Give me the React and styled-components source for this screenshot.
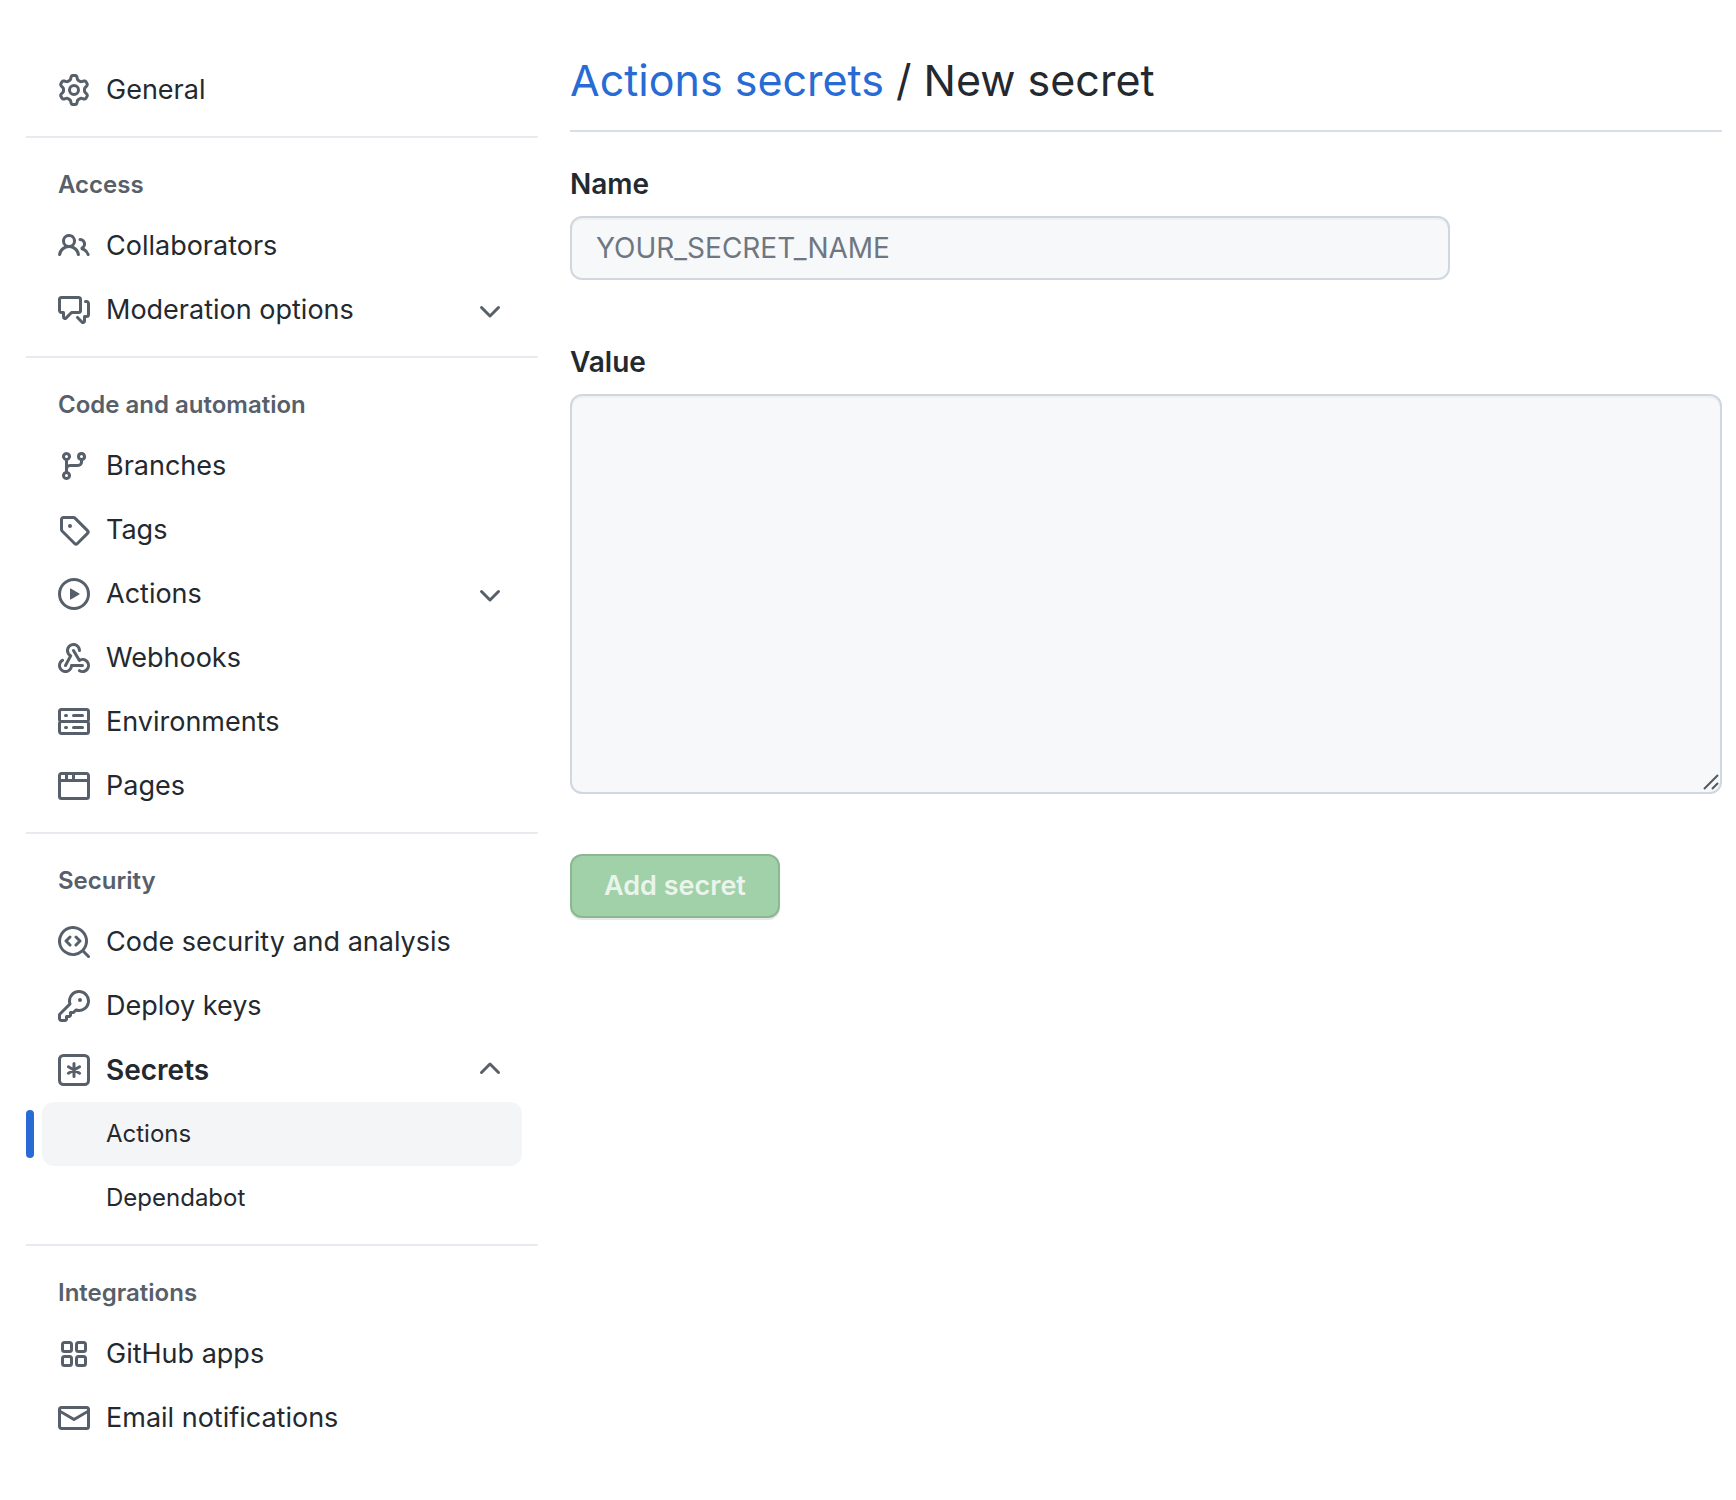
import React, { useState } from "react";
import styled, { createGlobalStyle, css } from "styled-components";

const color = {
  text: "#24292f",
  muted: "#57606a",
  placeholder: "#6e7781",
  accent: "#286bd5",
  border: "#d0d7de",
  rule: "#d8dee4",
  softRule: "#e7ebef",
  field: "#f6f8fa",
  selected: "#f4f5f7",
};

const GlobalStyle = createGlobalStyle`
  *, *::before, *::after { box-sizing: border-box; }
  body {
    margin: 0;
    background: #fff;
    color: ${color.text};
    font-family: Inter, "Liberation Sans", sans-serif;
    font-size: 28px;
    line-height: 40px;
  }
`;

const Page = styled.div`
  display: flex;
  align-items: flex-start;
  gap: 32px;
  padding: 0 14px 48px 26px;
`;

const Sidebar = styled.nav`
  flex: 0 0 512px;
  padding-top: 58px;
`;

const Group = styled.section`
  & + & {
    margin-top: 14px;
    padding-top: 27px;
    border-top: 2px solid ${color.softRule};
  }
`;

const GroupTitle = styled.h2`
  margin: 0 32px 9px;
  color: ${color.muted};
  font-size: 24px;
  font-weight: 600;
  line-height: 40px;
`;

const List = styled.ul`
  margin: 0;
  padding: 0 16px;
  list-style: none;
`;

const SubList = styled(List)`
  padding: 0;
`;

const rowStyle = css`
  display: flex;
  align-items: center;
  gap: 16px;
  width: 100%;
  padding: 12px 16px;
  border: 0;
  border-radius: 12px;
  background: transparent;
  color: ${color.text};
  font: inherit;
  font-size: 27px;
  text-align: left;
  text-decoration: none;
  cursor: pointer;
`;

const RowLink = styled.a`
  ${rowStyle}
`;

const RowToggle = styled.button`
  ${rowStyle}
  ${(p) =>
    p.$strong &&
    css`
      font-size: 28px;
      font-weight: 600;
    `}
`;

const SubLink = styled.a`
  ${rowStyle}
  position: relative;
  padding-left: 64px;
  font-size: 24px;
  ${(p) =>
    p.$selected &&
    css`
      background: ${color.selected};
      &::before {
        content: "";
        position: absolute;
        top: 8px;
        bottom: 8px;
        left: -16px;
        width: 8px;
        border-radius: 4px;
        background: ${color.accent};
      }
    `}
`;

const RowLabel = styled.span`
  flex: 1;
`;

const IconSvg = styled.svg`
  flex: none;
  width: 32px;
  height: 32px;
  fill: ${color.muted};
`;

const Main = styled.main`
  flex: 1;
  min-width: 0;
  padding-top: 48px;
`;

const Title = styled.h1`
  margin: 0 0 32px;
  padding-bottom: 18px;
  border-bottom: 2px solid ${color.rule};
  font-size: 43px;
  font-weight: 400;
  line-height: 64px;
`;

const TitleLink = styled.a`
  color: ${color.accent};
  text-decoration: none;
`;

const Fields = styled.div`
  display: flex;
  flex-direction: column;
  gap: 62px;
  margin-bottom: 60px;
`;

const Field = styled.div`
  display: flex;
  flex-direction: column;
  gap: 12px;
`;

const Label = styled.label`
  font-weight: 600;
`;

const controlStyle = css`
  width: 100%;
  border: 2px solid ${color.border};
  border-radius: 12px;
  outline: none;
  background: ${color.field};
  box-shadow: inset 0 2px 0 rgba(208, 215, 222, 0.2);
  color: ${color.text};
  font: inherit;
`;

const TextInput = styled.input`
  ${controlStyle}
  max-width: 880px;
  height: 64px;
  padding: 10px 24px;
  &::placeholder {
    color: ${color.placeholder};
    opacity: 1;
  }
`;

const TextAreaBox = styled.div`
  position: relative;
  display: flex;
`;

const TextArea = styled.textarea`
  ${controlStyle}
  height: 400px;
  padding: 16px 24px;
  resize: vertical;
  &::-webkit-resizer {
    background: transparent;
  }
`;

const Grip = styled.svg`
  position: absolute;
  right: 3px;
  bottom: 4px;
  width: 16px;
  height: 16px;
  fill: none;
  stroke: #55585c;
  stroke-width: 2;
  pointer-events: none;
`;

const SubmitButton = styled.button`
  height: 64px;
  padding: 0 32px;
  border: 2px solid #8bb893;
  border-radius: 12px;
  background: #a1d1a8;
  box-shadow: 0 2px 0 rgba(27, 31, 36, 0.1);
  color: rgba(255, 255, 255, 0.8);
  font: inherit;
  font-size: 27px;
  font-weight: 600;
`;

const icons = {
  gear: (
    <path d="M7.429 1.525a6.593 6.593 0 011.142 0c.036.003.108.036.137.146l.289 1.105c.147.56.55.967.997 1.189.174.086.341.183.501.29.417.278.97.423 1.53.27l1.102-.303c.11-.03.175.016.195.046.219.31.41.641.573.989.014.031.022.11-.059.19l-.815.806c-.411.406-.562.957-.53 1.456a4.588 4.588 0 010 .582c-.032.499.119 1.05.53 1.456l.815.806c.08.08.073.159.059.19a6.494 6.494 0 01-.573.99c-.02.029-.086.074-.195.045l-1.103-.303c-.559-.153-1.112-.008-1.529.27-.16.107-.327.204-.5.29-.449.222-.851.628-.998 1.189l-.289 1.105c-.029.11-.101.143-.137.146a6.613 6.613 0 01-1.142 0c-.036-.003-.108-.037-.137-.146l-.289-1.105c-.147-.56-.55-.967-.997-1.189a4.502 4.502 0 01-.501-.29c-.417-.278-.97-.423-1.53-.27l-1.102.303c-.11.03-.175-.016-.195-.046a6.492 6.492 0 01-.573-.989c-.014-.031-.022-.11.059-.19l.815-.806c.411-.406.562-.957.53-1.456a4.587 4.587 0 010-.582c.032-.499-.119-1.05-.53-1.456l-.815-.806c-.08-.08-.073-.159-.059-.19a6.44 6.44 0 01.573-.99c.02-.029.086-.075.195-.045l1.103.303c.559.153 1.112.008 1.529-.27.16-.107.327-.204.5-.29.449-.222.851-.628.998-1.189l.289-1.105c.029-.11.101-.143.137-.146zM8 0c-.236 0-.47.01-.701.03-.743.065-1.29.615-1.458 1.261l-.29 1.106c-.017.066-.078.158-.211.224a5.994 5.994 0 00-.668.386c-.123.082-.233.09-.3.071L3.27 2.776c-.644-.177-1.392.02-1.82.63a7.977 7.977 0 00-.704 1.217c-.315.675-.111 1.422.363 1.891l.815.806c.05.048.098.147.088.294a6.084 6.084 0 000 .772c.01.147-.038.246-.088.294l-.815.806c-.474.469-.678 1.216-.363 1.891.2.428.436.835.704 1.218.428.609 1.176.806 1.82.63l1.103-.303c.066-.019.176-.011.299.071.213.143.436.272.668.386.133.066.194.158.212.224l.289 1.106c.169.646.715 1.196 1.458 1.26a8.094 8.094 0 001.402 0c.743-.064 1.29-.614 1.458-1.26l.29-1.106c.017-.066.078-.158.211-.224a5.98 5.98 0 00.668-.386c.123-.082.233-.09.3-.071l1.102.302c.644.177 1.392-.02 1.82-.63.268-.382.505-.789.704-1.217.315-.675.111-1.422-.364-1.891l-.814-.806c-.05-.048-.098-.147-.088-.294a6.1 6.1 0 000-.772c-.01-.147.039-.246.088-.294l.814-.806c.475-.469.679-1.216.364-1.891a7.992 7.992 0 00-.704-1.218c-.428-.609-1.176-.806-1.82-.63l-1.103.303c-.066.019-.176.011-.299-.071a5.991 5.991 0 00-.668-.386c-.133-.066-.194-.158-.212-.224L10.16 1.29C9.99.645 9.444.095 8.701.031A8.094 8.094 0 008 0zm1.5 8a1.5 1.5 0 11-3 0 1.5 1.5 0 013 0zM11 8a3 3 0 11-6 0 3 3 0 016 0z" />
  ),
  people: (
    <path d="M5.5 3.5a2 2 0 100 4 2 2 0 000-4zM2 5.5a3.5 3.5 0 115.898 2.549 5.507 5.507 0 013.034 4.084.75.75 0 11-1.482.235 4.001 4.001 0 00-7.9 0 .75.75 0 01-1.482-.236A5.507 5.507 0 013.102 8.05 3.49 3.49 0 012 5.5zM11 4a.75.75 0 100 1.5 1.5 1.5 0 01.666 2.844.75.75 0 00-.416.672v.352a.75.75 0 00.574.73c1.2.289 2.162 1.2 2.522 2.372a.75.75 0 101.434-.44 5.01 5.01 0 00-2.56-3.012A3 3 0 0011 4z" />
  ),
  discussion: (
    <path d="M1.5 2.75a.25.25 0 01.25-.25h8.5a.25.25 0 01.25.25v5.5a.25.25 0 01-.25.25h-3.5a.75.75 0 00-.53.22L3.5 11.44V9.25a.75.75 0 00-.75-.75h-1a.25.25 0 01-.25-.25v-5.5zM1.75 1A1.75 1.75 0 000 2.75v5.5C0 9.216.784 10 1.75 10H2v1.543a1.457 1.457 0 002.487 1.03L7.061 10h3.189A1.75 1.75 0 0012 8.25v-5.5A1.75 1.75 0 0010.25 1h-8.5zM14.5 4.75a.25.25 0 00-.25-.25h-.5a.75.75 0 110-1.5h.5c.966 0 1.75.784 1.75 1.75v5.5A1.75 1.75 0 0114.25 12H14v1.543a1.457 1.457 0 01-2.487 1.03L9.22 12.28a.75.75 0 111.06-1.06l2.22 2.22v-2.19a.75.75 0 01.75-.75h1a.25.25 0 00.25-.25v-5.5z" />
  ),
  branch: (
    <path d="M11.75 2.5a.75.75 0 100 1.5.75.75 0 000-1.5zm-2.25.75a2.25 2.25 0 113 2.122V6A2.5 2.5 0 0110 8.5H6a1 1 0 00-1 1v1.128a2.251 2.251 0 11-1.5 0V5.372a2.25 2.25 0 111.5 0v1.836A2.492 2.492 0 016 7h4a1 1 0 001-1v-.628A2.25 2.25 0 019.5 3.25zM4.25 12a.75.75 0 100 1.5.75.75 0 000-1.5zM3.5 3.25a.75.75 0 111.5 0 .75.75 0 01-1.5 0z" />
  ),
  tag: (
    <path d="M2.5 7.775V2.75a.25.25 0 01.25-.25h5.025a.25.25 0 01.177.073l6.25 6.25a.25.25 0 010 .354l-5.025 5.025a.25.25 0 01-.354 0l-6.25-6.25a.25.25 0 01-.073-.177zm-1.5 0V2.75C1 1.784 1.784 1 2.75 1h5.025c.464 0 .91.184 1.238.513l6.25 6.25a1.75 1.75 0 010 2.474l-5.026 5.026a1.75 1.75 0 01-2.474 0l-6.25-6.25A1.75 1.75 0 011 7.775zM6 5a1 1 0 100 2 1 1 0 000-2z" />
  ),
  play: (
    <path d="M1.5 8a6.5 6.5 0 1113 0 6.5 6.5 0 01-13 0zM8 0a8 8 0 100 16A8 8 0 008 0zM6.379 5.227A.25.25 0 006 5.442v5.117a.25.25 0 00.379.214l4.264-2.559a.25.25 0 000-.428L6.379 5.227z" />
  ),
  webhook: (
    <path d="M5.5 4.25a2.25 2.25 0 014.5 0 .75.75 0 001.5 0 3.75 3.75 0 10-6.14 2.889l-2.272 4.258a.75.75 0 001.324.706L7 7.25a.75.75 0 00-.309-1.015A2.25 2.25 0 015.5 4.25zM7.364 3.607a.75.75 0 011.03.257l2.608 4.349a3.75 3.75 0 11-.628 6.785.75.75 0 01.752-1.299 2.25 2.25 0 10-.033-3.88.75.75 0 01-1.03-.256L7.107 4.636a.75.75 0 01.257-1.03zM2.9 8.776A.75.75 0 012.625 9.8 2.25 2.25 0 106 11.75a.75.75 0 01.75-.751h5.5a.75.75 0 010 1.5H7.425a3.751 3.751 0 11-5.55-3.998.75.75 0 011.024.274z" />
  ),
  server: (
    <path d="M1.75 1A1.75 1.75 0 000 2.75v4c0 .372.116.717.314 1a1.742 1.742 0 00-.314 1v4c0 .966.784 1.75 1.75 1.75h12.5A1.75 1.75 0 0016 12.75v-4c0-.372-.116-.717-.314-1 .198-.283.314-.628.314-1v-4A1.75 1.75 0 0014.25 1H1.75zm0 7.5a.25.25 0 00-.25.25v4c0 .138.112.25.25.25h12.5a.25.25 0 00.25-.25v-4a.25.25 0 00-.25-.25H1.75zM1.5 2.75a.25.25 0 01.25-.25h12.5a.25.25 0 01.25.25v4a.25.25 0 01-.25.25H1.75a.25.25 0 01-.25-.25v-4zm5.5 2A.75.75 0 017.75 4h4.5a.75.75 0 010 1.5h-4.5A.75.75 0 017 4.75zM7.75 10a.75.75 0 000 1.5h4.5a.75.75 0 000-1.5h-4.5zM3 4.75A.75.75 0 013.75 4h.5a.75.75 0 010 1.5h-.5A.75.75 0 013 4.75zM3.75 10a.75.75 0 000 1.5h.5a.75.75 0 000-1.5h-.5z" />
  ),
  browser: (
    <path d="M0 2.75C0 1.784.784 1 1.75 1h12.5c.966 0 1.75.784 1.75 1.75v10.5A1.75 1.75 0 0114.25 15H1.75A1.75 1.75 0 010 13.25V2.75zm1.75-.25a.25.25 0 00-.25.25V4.5h2v-2H1.75zM5 2.5v2h2v-2H5zm3.5 0v2h6V2.75a.25.25 0 00-.25-.25H8.5zm6 3.5h-13v7.25c0 .138.112.25.25.25h12.5a.25.25 0 00.25-.25V6z" />
  ),
  codescan: (
    <path d="M8.47 4.97a.75.75 0 000 1.06L9.94 7.5 8.47 8.97a.75.75 0 101.06 1.06l2-2a.75.75 0 000-1.06l-2-2a.75.75 0 00-1.06 0zM6.53 6.03a.75.75 0 00-1.06-1.06l-2 2a.75.75 0 000 1.06l2 2a.75.75 0 101.06-1.06L5.06 7.5l1.47-1.47zM12.246 13.307a7.5 7.5 0 111.06-1.06l2.474 2.473a.75.75 0 11-1.06 1.06l-2.474-2.473zM1.5 7.5a6 6 0 1110.386 4.094.75.75 0 00-.292.293A6 6 0 011.5 7.5z" />
  ),
  key: (
    <path d="M6.5 5.5a4 4 0 112.731 3.795.75.75 0 00-.768.18L7.44 10.5H6.25a.75.75 0 00-.75.75v1.19l-.06.06H4.25a.75.75 0 00-.75.75v1.19l-.06.06H1.75a.25.25 0 01-.25-.25v-1.69l5.024-5.023a.75.75 0 00.181-.768A3.995 3.995 0 016.5 5.5zm4-5.5a5.5 5.5 0 00-5.348 6.788L.22 11.72a.75.75 0 00-.22.53v2C0 15.216.784 16 1.75 16h2a.75.75 0 00.53-.22l.5-.5a.75.75 0 00.22-.53V14h.75a.75.75 0 00.53-.22l.5-.5a.75.75 0 00.22-.53V12h.75a.75.75 0 00.53-.22l.932-.932A5.5 5.5 0 1010.5 0zm.5 6a1 1 0 100-2 1 1 0 000 2z" />
  ),
  asterisk: (
    <g fill="none" stroke={color.muted} strokeWidth="1.5" strokeLinecap="round">
      <rect x="0.75" y="0.75" width="14.5" height="14.5" rx="2" />
      <path d="M8 4.8v6.4M5.2 6.4l5.6 3.2M10.8 6.4L5.2 9.6" />
    </g>
  ),
  apps: (
    <g fill="none" stroke={color.muted} strokeWidth="1.5">
      <rect x="2.25" y="2.25" width="4.5" height="4.5" rx="1" />
      <rect x="9.25" y="2.25" width="4.5" height="4.5" rx="1" />
      <rect x="2.25" y="9.25" width="4.5" height="4.5" rx="1" />
      <rect x="9.25" y="9.25" width="4.5" height="4.5" rx="1" />
    </g>
  ),
  mail: (
    <path d="M1.75 2A1.75 1.75 0 000 3.75v.736a.75.75 0 000 .027v7.737C0 13.216.784 14 1.75 14h12.5A1.75 1.75 0 0016 12.25v-8.5A1.75 1.75 0 0014.25 2H1.75zM14.5 4.07v-.32a.25.25 0 00-.25-.25H1.75a.25.25 0 00-.25.25v.32L8 7.88l6.5-3.81zm-13 1.74v6.441c0 .138.112.25.25.25h12.5a.25.25 0 00.25-.25V5.809L8.38 9.397a.75.75 0 01-.76 0L1.5 5.809z" />
  ),
  down: (
    <path d="M12.78 6.22a.75.75 0 010 1.06l-4.25 4.25a.75.75 0 01-1.06 0L3.22 7.28a.75.75 0 011.06-1.06L8 9.94l3.72-3.72a.75.75 0 011.06 0z" />
  ),
  up: (
    <path d="M3.22 9.78a.75.75 0 010-1.06l4.25-4.25a.75.75 0 011.06 0l4.25 4.25a.75.75 0 01-1.06 1.06L8 6.06 4.28 9.78a.75.75 0 01-1.06 0z" />
  ),
};

function Icon({ name }) {
  return (
    <IconSvg viewBox="0 0 16 16" fillRule="evenodd" aria-hidden="true">
      {icons[name]}
    </IconSvg>
  );
}

const groups = [
  { items: [{ label: "General", icon: "gear" }] },
  {
    title: "Access",
    items: [
      { label: "Collaborators", icon: "people" },
      { label: "Moderation options", icon: "discussion", children: [] },
    ],
  },
  {
    title: "Code and automation",
    items: [
      { label: "Branches", icon: "branch" },
      { label: "Tags", icon: "tag" },
      { label: "Actions", icon: "play", children: [] },
      { label: "Webhooks", icon: "webhook" },
      { label: "Environments", icon: "server" },
      { label: "Pages", icon: "browser" },
    ],
  },
  {
    title: "Security",
    items: [
      { label: "Code security and analysis", icon: "codescan" },
      { label: "Deploy keys", icon: "key" },
      {
        label: "Secrets",
        icon: "asterisk",
        active: true,
        children: [{ label: "Actions", selected: true }, { label: "Dependabot" }],
      },
    ],
  },
  {
    title: "Integrations",
    items: [
      { label: "GitHub apps", icon: "apps" },
      { label: "Email notifications", icon: "mail" },
    ],
  },
];

function NavItem({ item }) {
  const [open, setOpen] = useState(Boolean(item.active));

  if (!item.children) {
    return (
      <li>
        <RowLink href="#">
          <Icon name={item.icon} />
          <RowLabel>{item.label}</RowLabel>
        </RowLink>
      </li>
    );
  }

  return (
    <li>
      <RowToggle
        type="button"
        $strong={item.active}
        aria-expanded={open}
        onClick={() => setOpen(!open)}
      >
        <Icon name={item.icon} />
        <RowLabel>{item.label}</RowLabel>
        <Icon name={open ? "up" : "down"} />
      </RowToggle>
      {open && item.children.length > 0 && (
        <SubList>
          {item.children.map((child) => (
            <li key={child.label}>
              <SubLink
                href="#"
                $selected={child.selected}
                aria-current={child.selected ? "page" : undefined}
              >
                {child.label}
              </SubLink>
            </li>
          ))}
        </SubList>
      )}
    </li>
  );
}

export default function App() {
  return (
    <>
      <GlobalStyle />
      <Page>
        <Sidebar>
          {groups.map((group) => (
            <Group key={group.title || "general"}>
              {group.title && <GroupTitle>{group.title}</GroupTitle>}
              <List>
                {group.items.map((item) => (
                  <NavItem key={item.label} item={item} />
                ))}
              </List>
            </Group>
          ))}
        </Sidebar>
        <Main>
          <Title>
            <TitleLink href="#">Actions secrets</TitleLink> / New secret
          </Title>
          <form onSubmit={(event) => event.preventDefault()}>
            <Fields>
              <Field>
                <Label htmlFor="secret-name">Name</Label>
                <TextInput id="secret-name" type="text" placeholder="YOUR_SECRET_NAME" />
              </Field>
              <Field>
                <Label htmlFor="secret-value">Value</Label>
                <TextAreaBox>
                  <TextArea id="secret-value" />
                  <Grip viewBox="0 0 16 16" aria-hidden="true">
                    <path d="M1 15L15 1M9 15l6-6" />
                  </Grip>
                </TextAreaBox>
              </Field>
            </Fields>
            <SubmitButton type="submit" disabled>
              Add secret
            </SubmitButton>
          </form>
        </Main>
      </Page>
    </>
  );
}
